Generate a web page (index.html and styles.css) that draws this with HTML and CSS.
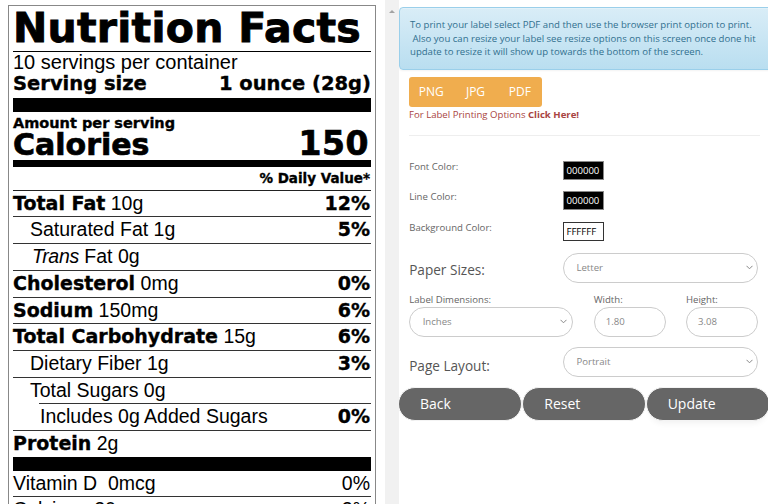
FILE: index.html
```html
<!DOCTYPE html>
<html>
<head>
<meta charset="utf-8">
<title>Nutrition Label</title>
<link rel="stylesheet" href="styles.css">
</head>
<body>
<div class="page">
  <div class="left">
    <div class="label-wrap">
      <div class="nf">
        <div class="nf-title">Nutrition Facts</div>
        <div class="nf-servings">10 servings per container</div>
        <div class="nf-size"><span>Serving size</span><span>1 ounce (28g)</span></div>
        <div class="bar-lg"></div>
        <div class="nf-amount">Amount per serving</div>
        <div class="nf-cal"><span>Calories</span><span class="nf-cal-num">150</span></div>
        <div class="bar-md"></div>
        <div class="nf-dv">% Daily Value*</div>
        <div class="nf-row"><span><b>Total Fat</b> 10g</span><b>12%</b></div>
        <div class="nf-row ind"><span>Saturated Fat 1g</span><b>5%</b></div>
        <div class="nf-row ind-t"><span><i>Trans</i> Fat 0g</span></div>
        <div class="nf-row"><span><b>Cholesterol</b> 0mg</span><b>0%</b></div>
        <div class="nf-row"><span><b>Sodium</b> 150mg</span><b>6%</b></div>
        <div class="nf-row"><span><b>Total Carbohydrate</b> 15g</span><b>6%</b></div>
        <div class="nf-row ind"><span>Dietary Fiber 1g</span><b>3%</b></div>
        <div class="nf-row ind no-line"><span>Total Sugars 0g</span></div>
        <div class="rule-ind"></div>
        <div class="nf-row ind2"><span>Includes 0g Added Sugars</span><b>0%</b></div>
        <div class="nf-row no-line"><span><b>Protein</b> 2g</span></div>
        <div class="bar-lg"></div>
        <div class="nf-row"><span>Vitamin D&nbsp; 0mcg</span><span>0%</span></div>
        <div class="nf-row"><span>Calcium&nbsp; 20mg</span><span>2%</span></div>
      </div>
    </div>
    <div class="scroll-track"><div class="scroll-up"></div></div>
  </div>

  <div class="right">
    <div class="alert">To print your label select PDF and then use the browser print option to print.<br>&nbsp;Also you can resize your label see resize options on this screen once done hit<br>update to resize it will show up towards the bottom of the screen.</div>

    <div class="export">
      <span class="exp-btn">PNG</span>
      <span class="exp-btn">JPG</span>
      <span class="exp-btn">PDF</span>
    </div>
    <div class="print-opt">For Label Printing Options <b>Click Here!</b></div>
    <div class="divider"></div>

    <div class="crow first">
      <div class="c5 flabel">Font Color:</div>
      <div class="c7"><span class="swatch dark">000000</span></div>
    </div>
    <div class="crow">
      <div class="c5 flabel">Line Color:</div>
      <div class="c7"><span class="swatch dark">000000</span></div>
    </div>
    <div class="crow">
      <div class="c5 flabel">Background Color:</div>
      <div class="c7"><span class="swatch light">FFFFFF</span></div>
    </div>

    <div class="srow paper">
      <div class="c5 biglabel">Paper Sizes:</div>
      <div class="c7">
        <div class="select"><span>Letter</span><svg class="chev" width="7" height="5" viewBox="0 0 7 5"><polyline points="0.5,0.8 3.5,3.8 6.5,0.8" fill="none" stroke="#888" stroke-width="1"/></svg></div>
      </div>
    </div>

    <div class="drow">
      <div class="c6">
        <div class="flabel dl">Label Dimensions:</div>
        <div class="select inches"><span>Inches</span><svg class="chev" width="7" height="5" viewBox="0 0 7 5"><polyline points="0.5,0.8 3.5,3.8 6.5,0.8" fill="none" stroke="#888" stroke-width="1"/></svg></div>
      </div>
      <div class="c3">
        <div class="flabel dl">Width:</div>
        <div class="select num"><span>1.80</span></div>
      </div>
      <div class="c3">
        <div class="flabel dl">Height:</div>
        <div class="select num"><span>3.08</span></div>
      </div>
    </div>

    <div class="srow layout">
      <div class="c5 biglabel">Page Layout:</div>
      <div class="c7">
        <div class="select"><span>Portrait</span><svg class="chev" width="7" height="5" viewBox="0 0 7 5"><polyline points="0.5,0.8 3.5,3.8 6.5,0.8" fill="none" stroke="#888" stroke-width="1"/></svg></div>
      </div>
    </div>

    <div class="actions">
      <button class="act">Back</button>
      <button class="act">Reset</button>
      <button class="act">Update</button>
    </div>
  </div>
</div>
</body>
</html>
```

FILE: styles.css
```css
* { box-sizing: border-box; }
html, body { margin: 0; padding: 0; background: #fff; }
body { width: 768px; height: 504px; overflow: hidden; }

.page { display: flex; height: 504px; overflow: hidden; }

/* ---------- left: label preview ---------- */
.left { width: 399px; flex: none; display: flex; height: 504px; overflow: hidden; }
.label-wrap { width: 385px; padding: 5px 0 0 8px; overflow: hidden; }
.scroll-track { width: 14px; background: #f1f1f1; display: flex; justify-content: center; padding-top: 10px; }
.scroll-up { width: 0; height: 0; border-left: 3px solid transparent; border-right: 3px solid transparent; border-bottom: 3px solid #a3a3a3; }

.nf {
  width: 368px;
  border: 1px solid #888;
  padding: 2px 4px 0;
  font-family: "Liberation Sans", Arial, sans-serif;
  color: #000;
}
.nf b, .nf-title, .nf-size, .nf-amount, .nf-cal, .nf-dv {
  font-family: "DejaVu Sans", "Liberation Sans", sans-serif;
  font-weight: bold;
  -webkit-text-stroke: 0.35px #000;
}
.nf-title {
  font-size: 41px; line-height: 41px; letter-spacing: 0.25px;
  padding-bottom: 2px; border-bottom: 1px solid #000; white-space: nowrap;
  -webkit-text-stroke: 0.9px #000;
}
.nf-servings { font-size: 20px; line-height: 20px; }
.nf-size { display: flex; justify-content: space-between; font-size: 19.5px; line-height: 20px; margin-top: 2px; }
.bar-lg { height: 14.5px; background: #000; margin-top: 3.5px; }
.nf-row + .bar-lg { margin-top: 0; height: 14px; }
.nf-amount { font-size: 14.5px; line-height: 16px; margin-top: 3px; }
.nf-cal { display: flex; justify-content: space-between; align-items: baseline; font-size: 30px; line-height: 26px; margin-top: 0; -webkit-text-stroke: 0.7px #000; }
.nf-cal-num { font-size: 33px; padding-right: 2px; letter-spacing: 0.5px; }
.bar-md { height: 6.8px; background: #000; margin-top: 2px; }
.nf-dv { text-align: right; font-size: 13.5px; line-height: 16px; margin-top: 3px; padding: 0 1px 4px 0; border-bottom: 1px solid #222; }

.nf-row {
  display: flex; justify-content: space-between;
  font-size: 19.5px; line-height: 22px;
  padding: 1px 1px 2.7px 0;
  border-bottom: 1px solid #333;
  white-space: nowrap;
}
.nf-row b { font-size: 19px; }
.nf-row.ind { padding-left: 17px; }
.nf-row.ind-t { padding-left: 19px; }
.nf-row.ind-t i { letter-spacing: -0.3px; }
.nf-row.ind2 { padding-left: 27px; }
.nf-row.no-line { border-bottom: none; }
.rule-ind { height: 1px; background: #333; margin-left: 26px; }

/* ---------- right: settings ---------- */
.right {
  width: 369px; flex: none; height: 504px; overflow: hidden;
  font-family: "Open Sans", "Liberation Sans", sans-serif;
  color: #555;
}
.alert {
  margin: 7px -6px 0 0;
  border: 1px solid #9acfea;
  border-radius: 4px;
  background: linear-gradient(to bottom, #d9edf7 0%, #b9def0 100%);
  color: #31708f;
  font-size: 9.6px; line-height: 13.6px;
  padding: 10px 11px 10px 10px;
  white-space: nowrap;
  box-shadow: inset 0 1px 0 rgba(255,255,255,.25), 0 1px 2px rgba(0,0,0,.05);
}
.export {
  display: flex; width: 133px; height: 30px;
  margin: 7px 0 0 10px;
  background: #f0ad4e; border-radius: 3px;
}
.exp-btn {
  flex: 1; display: flex; align-items: center; justify-content: center;
  color: #fff; font-size: 12px;
}
.print-opt { margin: 1.4px 0 0 10px; font-size: 9.6px; line-height: 13.6px; color: #a94442; }
.print-opt b { font-weight: 700; }
.divider { height: 1px; background: #eee; margin: 13.2px 8px 0 10px; }

.c5, .c7, .c6, .c3 { padding: 0 10.2px; }
.c5 { width: 41.6667%; }
.c7 { width: 58.3333%; }
.c6 { width: 50%; }
.c3 { width: 25%; }

.flabel { font-size: 9.6px; line-height: 13.6px; color: #666; white-space: nowrap; }
.biglabel { font-size: 13.6px; line-height: 19px; color: #555; white-space: nowrap; }

.crow { display: flex; align-items: flex-start; height: 30.5px; }
.crow.first { margin-top: 24px; }
.swatch {
  display: block; width: 41px; height: 19.3px; margin-top: 0.7px;
  font-family: "Open Sans", sans-serif; font-size: 9.6px; line-height: 17.3px;
  padding-left: 2.5px;
}
.swatch.dark { background: #000; color: #fff; border: 1px solid #888; }
.swatch.light { background: #fff; color: #000; border: 1px solid #333; border-top-width: 1.5px; border-left-width: 1.5px; }

.srow { display: flex; align-items: flex-start; }
.srow.paper { margin-top: 1.8px; }
.srow.paper .biglabel { margin-top: 7px; }
.srow.layout { margin-top: 10.6px; }
.srow.layout .biglabel { margin-top: 9px; }

.select {
  display: flex; align-items: center; justify-content: space-between;
  height: 29.4px; border: 1px solid #ccc; border-radius: 15px;
  padding: 0 4px 0 12.5px;
  font-size: 9.6px; color: #888;
  background: #fff;
}
.select.inches { padding-right: 5px; }
.select.num { padding-left: 11px; }
.chev { display: block; }

.drow { display: flex; margin-top: 10.5px; }
.dl { margin-bottom: 0.4px; }

.actions { display: flex; margin-top: 10px; height: 34.3px; }
.act {
  flex: none; width: 123.33px; height: 34.3px;
  margin: 0; padding: 0 0 0 21px;
  background: #666; color: #fff;
  border: 1px solid #f4f4f4; border-radius: 17px;
  font-family: "Open Sans", sans-serif; font-size: 14px; text-align: left;
}
.act:first-child { width: 124.3px; margin-left: -1px; }
.act:last-child { width: 124px; box-shadow: 0 6px 6px -4px rgba(0,0,0,0.06); }
```
